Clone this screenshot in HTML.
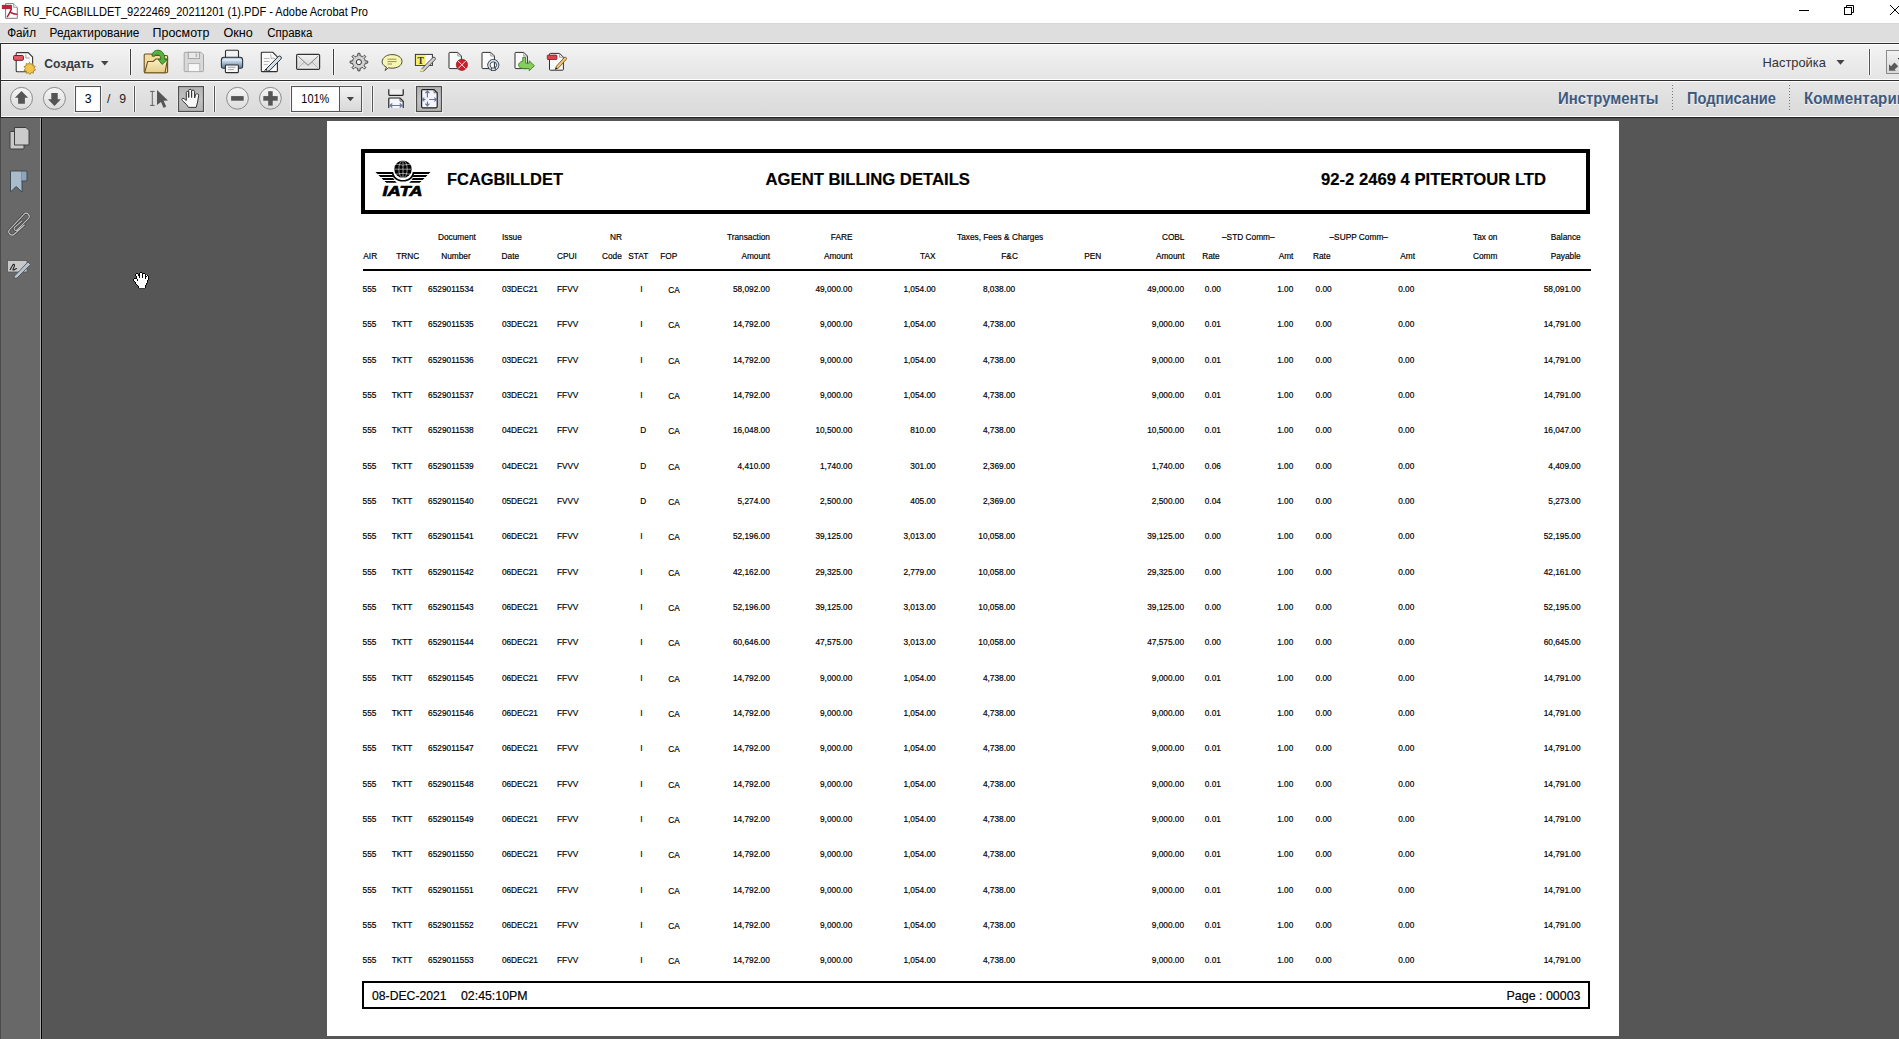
<!DOCTYPE html>
<html><head><meta charset="utf-8"><title>Adobe Acrobat Pro</title>
<style>
html,body{margin:0;padding:0;width:1899px;height:1039px;overflow:hidden;background:#565656;}
svg{display:block;font-family:"Liberation Sans",sans-serif;}
.pg>text{stroke:#000;stroke-width:0.18px;}
</style></head>
<body>
<svg width="1899" height="1039" viewBox="0 0 1899 1039">
<defs>
<linearGradient id="tb1" x1="0" y1="0" x2="0" y2="1"><stop offset="0" stop-color="#f3f3f3"/><stop offset="1" stop-color="#e4e4e4"/></linearGradient>
<linearGradient id="tb2" x1="0" y1="0" x2="0" y2="1"><stop offset="0" stop-color="#e6e6e6"/><stop offset="1" stop-color="#d9d9d9"/></linearGradient>
<linearGradient id="circ" x1="0" y1="0" x2="0" y2="1"><stop offset="0" stop-color="#f6f6f6"/><stop offset="1" stop-color="#dcdcdc"/></linearGradient>
<linearGradient id="sel" x1="0" y1="0" x2="0" y2="1"><stop offset="0" stop-color="#b2b2b2"/><stop offset="0.5" stop-color="#c2c2c2"/><stop offset="1" stop-color="#b4b4b4"/></linearGradient>
<linearGradient id="ddg" x1="0" y1="0" x2="0" y2="1"><stop offset="0" stop-color="#f2f2f2"/><stop offset="1" stop-color="#d8d8d8"/></linearGradient>
<linearGradient id="printg" x1="0" y1="0" x2="0" y2="1"><stop offset="0" stop-color="#7d95ab"/><stop offset="0.25" stop-color="#d6e6f2"/><stop offset="0.6" stop-color="#98b2c8"/><stop offset="1" stop-color="#5d7890"/></linearGradient>
<linearGradient id="mailg" x1="0" y1="0" x2="0" y2="1"><stop offset="0" stop-color="#f4f4f4"/><stop offset="0.6" stop-color="#dedede"/><stop offset="1" stop-color="#eeeeee"/></linearGradient>
<linearGradient id="folderg" x1="0" y1="0" x2="0" y2="1"><stop offset="0" stop-color="#fbf0c6"/><stop offset="1" stop-color="#e6cd88"/></linearGradient>
</defs>

<!-- title bar -->
<rect x="0" y="0" width="1899" height="23" fill="#ffffff"/>
<g id="pdficon">
<path d="M5.6 3.6 H13.6 L17.3 7.3 V18.3 H5.6 Z" fill="#ffffff" stroke="#8a7278" stroke-width="1"/>
<path d="M13.6 3.6 V7.3 H17.3" fill="#eeeeee" stroke="#a08a90" stroke-width="0.8"/>
<rect x="2.2" y="5.2" width="9.4" height="3.6" fill="#c41e3a" stroke="#8a1020" stroke-width="0.6"/>
<path d="M7.4 16.6 C9 14 10.6 11.5 11.3 9.2 M11 12.6 C12.5 13.6 14.6 14.2 16.6 14.2" fill="none" stroke="#b01830" stroke-width="1.5" stroke-linecap="round"/>
</g>
<text x="23.5" y="16.2" font-size="12" fill="#000" textLength="344.5" lengthAdjust="spacingAndGlyphs">RU_FCAGBILLDET_9222469_20211201 (1).PDF - Adobe Acrobat Pro</text>
<rect x="1799" y="10" width="10" height="1" fill="#000"/>
<path d="M1846.5 7.5 V5.5 H1853.5 V12.5 H1851.5" fill="none" stroke="#000" stroke-width="1"/>
<rect x="1844.5" y="7.5" width="7" height="7" fill="none" stroke="#000" stroke-width="1"/>
<path d="M1890 5 L1900 15 M1890 15 L1900 5" stroke="#000" stroke-width="1"/>

<!-- menu bar -->
<rect x="0" y="23" width="1899" height="20" fill="#dedede"/>
<rect x="0" y="23" width="1899" height="1" fill="#d8d8d8"/>
<rect x="0" y="42" width="1899" height="1" fill="#f3f3f3"/>
<g font-size="12" fill="#000">
<text x="7.2" y="37" textLength="28.8" lengthAdjust="spacingAndGlyphs">Файл</text>
<text x="49.6" y="37" textLength="89.8" lengthAdjust="spacingAndGlyphs">Редактирование</text>
<text x="152.6" y="37" textLength="56.8" lengthAdjust="spacingAndGlyphs">Просмотр</text>
<text x="223.5" y="37" textLength="29.4" lengthAdjust="spacingAndGlyphs">Окно</text>
<text x="267.2" y="37" textLength="45.2" lengthAdjust="spacingAndGlyphs">Справка</text>
</g>

<!-- toolbar 1 -->
<rect x="0" y="43" width="1899" height="1" fill="#2e2e2e"/>
<rect x="0" y="44" width="1899" height="36" fill="url(#tb1)"/>
<rect x="0" y="44" width="1899" height="1" fill="#ffffff"/>
<rect x="0" y="79" width="1899" height="1" fill="#ffffff"/>
<rect x="0" y="43" width="1" height="38" fill="#2e2e2e"/>
<rect x="0" y="80" width="1899" height="1" fill="#2e2e2e"/>

<!-- create icon -->
<g id="create">
<path d="M17.2 52.6 H28.2 L32.6 57 V70.8 Q32.6 71.8 31.6 71.8 H17.2 Q16.2 71.8 16.2 70.8 V53.6 Q16.2 52.6 17.2 52.6 Z" fill="#fbfbfb" stroke="#383838" stroke-width="1.1"/>
<path d="M25.8 54.6 V58 H29.6" fill="none" stroke="#9a9a9a" stroke-width="0.9"/>
<rect x="13.6" y="55.5" width="9.8" height="4.8" rx="1" fill="#e35b64" stroke="#7a1a22" stroke-width="1"/>
<path d="M29.5 62.2 L30.6 64.3 L32.8 63.5 L32.9 65.8 L35.2 66.3 L34 68.3 L35.6 70 L33.4 70.8 L33.4 73.1 L31.2 72.6 L29.9 74.5 L28.5 72.7 L26.3 73.3 L26.2 71 L24 70.3 L25.4 68.4 L24 66.5 L26.2 65.8 L26.2 63.5 L28.4 64.2 Z" fill="#f0c64a" stroke="#9c7a26" stroke-width="0.8"/>
</g>
<text x="44.2" y="67.9" font-size="13" font-weight="bold" fill="#343a42" textLength="49.8" lengthAdjust="spacingAndGlyphs">Создать</text>
<path d="M101 61 H108.5 L104.75 65.5 Z" fill="#444"/>
<rect x="129" y="49" width="1" height="26" fill="#ffffff" opacity="0.7"/><rect x="131" y="49" width="1" height="26" fill="#ffffff" opacity="0.7"/><rect x="130" y="49" width="1" height="26" fill="#3a3a3a"/>

<!-- open folder -->
<g id="open">
<path d="M145.3 54 H151.5 L153 55.5 H166.5 Q167.6 55.5 167.6 56.6 V71.6 Q167.6 72.7 166.5 72.7 H145.3 Q144.2 72.7 144.2 71.6 V55.1 Q144.2 54 145.3 54 Z" fill="#f3dc9c" stroke="#6b5320" stroke-width="1.1"/>
<path d="M147.7 61.5 H153.3 L155.8 59 H167.6 L165 72.7 H144.6 Z" fill="url(#folderg)" stroke="#6b5320" stroke-width="1.1"/>
<path d="M152.2 56.2 C152 51.5 156 49.6 159 50.3 C162.5 51 165 54.5 164.6 59.3 L167.6 59.3 L162.1 64.4 L158 59.3 L160.8 59.3 C161 56 158.8 54 156.7 54.3 C155 54.5 154.4 56 154.6 56.3 Z" fill="#58b33e" stroke="#2f6b1c" stroke-width="0.9"/>
</g>
<!-- save (disabled) -->
<g id="save">
<path d="M185 52.3 H201 L203.5 54.8 V70.8 Q203.5 71.6 202.7 71.6 H185 Q184.2 71.6 184.2 70.8 V53.1 Q184.2 52.3 185 52.3 Z" fill="#d9d9d9" stroke="#a6a6a6" stroke-width="1"/>
<rect x="188.3" y="52.3" width="11.2" height="6.2" fill="#e9e9e9" stroke="#a6a6a6" stroke-width="1"/>
<rect x="195.6" y="53.5" width="1.6" height="3.6" fill="#b6b6b6"/>
<rect x="188.2" y="63.6" width="11.6" height="8" fill="#f7f7f7" stroke="#b0b0b0" stroke-width="0.9"/>
</g>
<!-- print -->
<g id="print">
<rect x="225.5" y="50.3" width="13" height="9.5" rx="1" fill="#f2f2f2" stroke="#2e2e2e" stroke-width="1.1"/>
<path d="M224 57.3 H240 Q242.6 57.3 242.6 60 V66.5 Q242.6 68.3 240.8 68.3 H223.2 Q221.4 68.3 221.4 66.5 V60 Q221.4 57.3 224 57.3 Z" fill="url(#printg)" stroke="#2a3440" stroke-width="1.1"/>
<rect x="223.5" y="58.6" width="17" height="1.6" fill="#e8f2fa" opacity="0.8"/>
<rect x="225.4" y="65" width="13" height="7.6" rx="0.8" fill="#fafafa" stroke="#2e2e2e" stroke-width="1.1"/>
<path d="M228 67.3 H235.5 M228 69.6 H234" stroke="#8a8a8a" stroke-width="0.8"/>
</g>
<!-- edit document -->
<g id="editdoc">
<path d="M262.1 52.3 H272.8 L277.4 56.9 V70.8 Q277.4 71.6 276.6 71.6 H262.1 Q261.3 71.6 261.3 70.8 V53.1 Q261.3 52.3 262.1 52.3 Z" fill="#fafafa" stroke="#2e2e2e" stroke-width="1.1"/>
<path d="M270.5 54.3 Q271.5 57 271 58.5 Q273 58 275 58.5" fill="none" stroke="#9a9a9a" stroke-width="0.7"/>
<path d="M263.8 58.5 H269.5 M263.8 61.5 H269.5 M263.8 64.5 H267.5" stroke="#a8a8a8" stroke-width="0.8"/>
<path d="M266.8 68.3 L278.2 56.6 Q279.6 55.4 280.9 56.6 Q282 57.8 280.8 59.2 L269.4 70.8 L265.8 71.5 Z" fill="#d6e0ea" stroke="#263038" stroke-width="1"/>
<path d="M264.5 70.5 L266.6 68.5" stroke="#222" stroke-width="1"/>
</g>
<!-- email -->
<g id="mail">
<rect x="296.6" y="54.4" width="23" height="15" rx="1.2" fill="url(#mailg)" stroke="#333" stroke-width="1.2"/>
<path d="M298.3 56.3 L308.1 65.4 L317.9 56.3" fill="none" stroke="#707070" stroke-width="0.9"/>
<path d="M298.3 67.8 L304.3 62.2 M317.9 67.8 L312 62.2" fill="none" stroke="#a6a6a6" stroke-width="0.8"/>
</g>
<rect x="332" y="49" width="1" height="26" fill="#ffffff" opacity="0.7"/><rect x="334" y="49" width="1" height="26" fill="#ffffff" opacity="0.7"/><rect x="333" y="49" width="1" height="26" fill="#3a3a3a"/>
<!-- gear -->
<g id="gear">
<path d="M358.9 53.3 L359.1 53.3 L359.4 53.3 L359.6 53.3 L359.8 53.3 L360.0 54.0 L360.0 55.4 L360.1 55.8 L360.2 55.8 L360.4 55.9 L360.6 55.9 L360.7 56.0 L360.9 56.0 L361.0 56.1 L361.2 56.1 L361.3 56.2 L361.5 56.3 L361.7 56.3 L361.8 56.4 L362.0 56.5 L362.1 56.6 L362.2 56.6 L362.4 56.7 L362.5 56.8 L362.9 56.6 L363.9 55.6 L364.4 55.3 L364.6 55.4 L364.8 55.6 L365.0 55.7 L365.1 55.9 L365.3 56.0 L365.4 56.2 L365.6 56.4 L365.7 56.6 L365.4 57.1 L364.4 58.1 L364.2 58.5 L364.3 58.6 L364.4 58.8 L364.4 58.9 L364.5 59.0 L364.6 59.2 L364.7 59.3 L364.7 59.5 L364.8 59.7 L364.9 59.8 L364.9 60.0 L365.0 60.1 L365.0 60.3 L365.1 60.4 L365.1 60.6 L365.2 60.8 L365.2 60.9 L365.6 61.0 L367.0 61.0 L367.7 61.2 L367.7 61.4 L367.7 61.6 L367.7 61.9 L367.7 62.1 L367.7 62.3 L367.7 62.6 L367.7 62.8 L367.7 63.0 L367.0 63.2 L365.6 63.2 L365.2 63.3 L365.2 63.4 L365.1 63.6 L365.1 63.8 L365.0 63.9 L365.0 64.1 L364.9 64.2 L364.9 64.4 L364.8 64.5 L364.7 64.7 L364.7 64.9 L364.6 65.0 L364.5 65.2 L364.4 65.3 L364.4 65.4 L364.3 65.6 L364.2 65.7 L364.4 66.1 L365.4 67.1 L365.7 67.6 L365.6 67.8 L365.4 68.0 L365.3 68.2 L365.1 68.3 L365.0 68.5 L364.8 68.6 L364.6 68.8 L364.4 68.9 L363.9 68.6 L362.9 67.6 L362.5 67.4 L362.4 67.5 L362.2 67.6 L362.1 67.6 L362.0 67.7 L361.8 67.8 L361.7 67.9 L361.5 67.9 L361.3 68.0 L361.2 68.1 L361.0 68.1 L360.9 68.2 L360.7 68.2 L360.6 68.3 L360.4 68.3 L360.2 68.4 L360.1 68.4 L360.0 68.8 L360.0 70.2 L359.8 70.9 L359.6 70.9 L359.4 70.9 L359.1 70.9 L358.9 70.9 L358.7 70.9 L358.4 70.9 L358.2 70.9 L358.0 70.9 L357.8 70.2 L357.8 68.8 L357.7 68.4 L357.6 68.4 L357.4 68.3 L357.2 68.3 L357.1 68.2 L356.9 68.2 L356.8 68.1 L356.6 68.1 L356.5 68.0 L356.3 67.9 L356.1 67.9 L356.0 67.8 L355.8 67.7 L355.7 67.6 L355.6 67.6 L355.4 67.5 L355.3 67.4 L354.9 67.6 L353.9 68.6 L353.4 68.9 L353.2 68.8 L353.0 68.6 L352.8 68.5 L352.7 68.3 L352.5 68.2 L352.4 68.0 L352.2 67.8 L352.1 67.6 L352.4 67.1 L353.4 66.1 L353.6 65.7 L353.5 65.6 L353.4 65.4 L353.4 65.3 L353.3 65.2 L353.2 65.0 L353.1 64.9 L353.1 64.7 L353.0 64.5 L352.9 64.4 L352.9 64.2 L352.8 64.1 L352.8 63.9 L352.7 63.8 L352.7 63.6 L352.6 63.4 L352.6 63.3 L352.2 63.2 L350.8 63.2 L350.1 63.0 L350.1 62.8 L350.1 62.6 L350.1 62.3 L350.1 62.1 L350.1 61.9 L350.1 61.6 L350.1 61.4 L350.1 61.2 L350.8 61.0 L352.2 61.0 L352.6 60.9 L352.6 60.8 L352.7 60.6 L352.7 60.4 L352.8 60.3 L352.8 60.1 L352.9 60.0 L352.9 59.8 L353.0 59.7 L353.1 59.5 L353.1 59.3 L353.2 59.2 L353.3 59.0 L353.4 58.9 L353.4 58.8 L353.5 58.6 L353.6 58.5 L353.4 58.1 L352.4 57.1 L352.1 56.6 L352.2 56.4 L352.4 56.2 L352.5 56.0 L352.7 55.9 L352.8 55.7 L353.0 55.6 L353.2 55.4 L353.4 55.3 L353.9 55.6 L354.9 56.6 L355.3 56.8 L355.4 56.7 L355.6 56.6 L355.7 56.6 L355.8 56.5 L356.0 56.4 L356.1 56.3 L356.3 56.3 L356.5 56.2 L356.6 56.1 L356.8 56.1 L356.9 56.0 L357.1 56.0 L357.2 55.9 L357.4 55.9 L357.6 55.8 L357.7 55.8 L357.8 55.4 L357.8 54.0 L358.0 53.3 L358.2 53.3 L358.4 53.3 L358.7 53.3 Z" fill="#d2d2d2" stroke="#333" stroke-width="1" stroke-linejoin="round"/>
<circle cx="358.9" cy="62.1" r="2.6" fill="#f4f4f4" stroke="#333" stroke-width="1"/>
</g>
<!-- comment bubble -->
<g id="bubble">
<path d="M386.5 67 C382.5 65.5 381.5 62.5 382.5 60 C384 56 388.5 54.6 392 54.6 C397.5 54.6 402 57.3 402 61.5 C402 65.5 397.5 68.2 392 68.2 C390.5 68.2 389.5 68 388.5 67.8 L385 70.5 Z" fill="#f8f6b4" stroke="#4e4e34" stroke-width="1"/>
<path d="M387.5 59.2 H396.5 M387.5 61.6 H396.5 M387.5 64 H392" stroke="#8a843e" stroke-width="0.9"/>
</g>
<!-- text annotation -->
<g id="tannot">
<rect x="415.4" y="54.4" width="17" height="11" fill="#fbfbfb" stroke="#333" stroke-width="1"/>
<rect x="416" y="55" width="9.6" height="9.8" fill="#f4ee6a"/>
<text x="417.4" y="63.6" font-size="9.5" font-weight="bold" fill="#333" font-family="Liberation Serif">T</text>
<path d="M421.6 69 L432.8 57.6 Q434 56.6 435 57.6 Q436 58.7 435 59.8 L423.8 71 L420.8 71.5 Z" fill="#cfcfcf" stroke="#444" stroke-width="0.9"/>
<circle cx="421.8" cy="70.2" r="1.5" fill="#eee88e"/>
</g>
<!-- doc with red x -->
<g id="docx">
<path d="M449.8 52.4 H457.8 L461.4 56 V67.8 Q461.4 68.6 460.6 68.6 H449.8 Q449 68.6 449 67.8 V53.2 Q449 52.4 449.8 52.4 Z" fill="#fafafa" stroke="#2e2e2e" stroke-width="1"/>
<path d="M457.8 52.4 V56 H461.4" fill="none" stroke="#888" stroke-width="0.8"/>
<circle cx="461.9" cy="64.8" r="5.6" fill="#c8202c" stroke="#8a1520" stroke-width="0.7"/>
<path d="M458.2 61.1 L465.6 68.5 M465.6 61.1 L458.2 68.5" stroke="#ffffff" stroke-width="0.9"/>
</g>
<!-- doc with circular arrow -->
<g id="docr">
<path d="M482.8 52.4 H490.8 L494.4 56 V67.8 Q494.4 68.6 493.6 68.6 H482.8 Q482 68.6 482 67.8 V53.2 Q482 52.4 482.8 52.4 Z" fill="#fafafa" stroke="#2e2e2e" stroke-width="1"/>
<path d="M490.8 52.4 V56 H494.4" fill="none" stroke="#888" stroke-width="0.8"/>
<path d="M491 68.8 A4.4 4.4 0 1 1 495.6 68.8" fill="none" stroke="#333c46" stroke-width="3.2"/>
<path d="M491 68.8 A4.4 4.4 0 1 1 495.6 68.8" fill="none" stroke="#d6e2ec" stroke-width="1.6"/>
<rect x="491.3" y="68" width="4" height="2.6" fill="#d6e2ec" stroke="#333c46" stroke-width="0.8"/>
</g>
<!-- doc with green arrow -->
<g id="docg">
<path d="M515.8 52.4 H523.8 L527.4 56 V67.8 Q527.4 68.6 526.6 68.6 H515.8 Q515 68.6 515 67.8 V53.2 Q515 52.4 515.8 52.4 Z" fill="#fafafa" stroke="#2e2e2e" stroke-width="1"/>
<path d="M523.8 52.4 V56 H527.4" fill="none" stroke="#888" stroke-width="0.8"/>
<path d="M522.8 57.4 V61.2 C519.8 61.8 518.3 63.6 518.6 65.5 C519 67.6 521.2 68.6 524.2 68.6 H529.2 V70.8 L534.4 65.8 L529.2 60.8 V63.2 H525.6 V57.4 Z" fill="#86cf5c" stroke="#3b7d22" stroke-width="0.9"/>
</g>
<!-- doc with red bar and pencil -->
<g id="docp">
<path d="M550.3 53.4 H559.6 L563.4 57.2 V69.4 Q563.4 70.2 562.6 70.2 H550.3 Q549.5 70.2 549.5 69.4 V54.2 Q549.5 53.4 550.3 53.4 Z" fill="#fafafa" stroke="#2e2e2e" stroke-width="1"/>
<path d="M559.6 53.4 V57.2 H563.4" fill="none" stroke="#888" stroke-width="0.8"/>
<rect x="547.3" y="55.1" width="9.6" height="4.4" rx="0.6" fill="#e0404c" stroke="#7a1a22" stroke-width="0.8"/>
<path d="M556.4 66.2 L564.2 57.6 Q565.2 56.6 566.2 57.6 Q567 58.6 566.1 59.6 L558.3 68.2 L555.2 69.4 Z" fill="#ecc473" stroke="#6a4a18" stroke-width="0.8"/>
<path d="M555.2 69.4 L556.2 67.4 L557.4 68.6 Z" fill="#111"/>
</g>

<!-- right side toolbar 1 -->
<text x="1762.5" y="67.4" font-size="13" fill="#333" textLength="63.4" lengthAdjust="spacingAndGlyphs">Настройка</text>
<path d="M1836.5 60 H1844.5 L1840.5 64.8 Z" fill="#444"/>
<rect x="1868" y="49" width="1" height="26" fill="#ffffff" opacity="0.7"/><rect x="1870" y="49" width="1" height="26" fill="#ffffff" opacity="0.7"/><rect x="1869" y="49" width="1" height="26" fill="#555"/>
<g id="partialicon">
<rect x="1886.5" y="50.5" width="14" height="23" fill="url(#ddg)" stroke="#8a8a8a" stroke-width="1"/>
<path d="M1889 70.8 V64.2 L1891 66.2 L1894.5 62.5 L1898.2 66.2 L1894.6 69.6 L1895.9 70.8 Z" fill="#5a5a5a"/>
<rect x="1898" y="58" width="2" height="1.2" fill="#222"/>
</g>

<!-- toolbar 2 -->
<rect x="0" y="81" width="1899" height="36" fill="url(#tb2)"/>
<rect x="0" y="81" width="1899" height="1" fill="#ffffff"/>
<rect x="0" y="116" width="1899" height="1" fill="#ffffff"/>
<rect x="0" y="81" width="1" height="36" fill="#2e2e2e"/>
<rect x="0" y="117" width="1899" height="1" fill="#252525"/>

<!-- prev / next -->
<circle cx="21.5" cy="98.4" r="11" fill="url(#circ)" stroke="#8a8a8a" stroke-width="1"/>
<path d="M21.5 90.9 L28.1 97.8 H24.9 V103.7 H18.1 V97.8 H14.9 Z" fill="#555"/>
<circle cx="54.4" cy="98.4" r="11" fill="url(#circ)" stroke="#8a8a8a" stroke-width="1"/>
<path d="M54.5 105.9 L60.9 99.3 H57.7 V93.1 H51.3 V99.3 H48 Z" fill="#555"/>
<rect x="74.5" y="85.5" width="27" height="27" fill="none" stroke="#fafafa" stroke-width="1"/>
<rect x="75.5" y="86.5" width="25" height="25" fill="#ffffff" stroke="#555" stroke-width="1.1"/>
<text x="84.8" y="103" font-size="12.3" fill="#000">3</text>
<text x="107" y="103" font-size="12.3" fill="#222">/</text>
<text x="119.2" y="103" font-size="12.3" fill="#222">9</text>
<rect x="133" y="86" width="1" height="26" fill="#ffffff" opacity="0.7"/><rect x="135" y="86" width="1" height="26" fill="#ffffff" opacity="0.7"/><rect x="134" y="86" width="1" height="26" fill="#555"/>
<!-- select tool -->
<g id="selecttool">
<path d="M150 91.4 H154.6 M152.3 91.4 V105.4 M150 105.4 H154.6" stroke="#555" stroke-width="0.9" fill="none"/>
<path d="M157 90 L168 100.6 L163.6 100.8 L166.2 106.6 L163.6 107.9 L161 101.9 L157 104.9 Z" fill="#555"/>
</g>
<!-- hand tool selected -->
<rect x="177.5" y="85.5" width="27" height="27" fill="none" stroke="#fafafa" stroke-width="1"/>
<rect x="178.5" y="86.5" width="25" height="25" fill="url(#sel)" stroke="#4e4e4e" stroke-width="1.2"/>
<path d="M186.5 104.5 L182.3 100.5 C181 99 182.6 97.6 184 98.6 L186.3 100.5 V92.5 C186.3 91 188.7 91 188.7 92.5 V97.5 V90.5 C188.7 88.9 191.6 88.9 191.6 90.5 V97.5 V91.3 C191.6 89.7 194.6 89.7 194.6 91.3 V98 L195.5 94.8 C195.9 93.2 198.9 93.5 198.7 95.2 L197.6 102 L196.2 107.4 H188.5 Z" fill="#f8f8f8" stroke="#333" stroke-width="1"/>
<rect x="213" y="86" width="1" height="26" fill="#ffffff" opacity="0.7"/><rect x="215" y="86" width="1" height="26" fill="#ffffff" opacity="0.7"/><rect x="214" y="86" width="1" height="26" fill="#555"/>
<!-- zoom out / in -->
<circle cx="237.5" cy="98.3" r="10.9" fill="url(#circ)" stroke="#8a8a8a" stroke-width="1"/>
<rect x="231.1" y="96.1" width="12.6" height="4.6" fill="#555"/>
<circle cx="270.4" cy="98.3" r="10.9" fill="url(#circ)" stroke="#8a8a8a" stroke-width="1"/>
<rect x="263.3" y="96.1" width="14.4" height="4.6" fill="#555"/>
<rect x="268.2" y="91.2" width="4.5" height="14.4" fill="#555"/>
<!-- zoom box -->
<rect x="290.5" y="85.5" width="72" height="27" fill="none" stroke="#fafafa" stroke-width="1"/>
<rect x="291.5" y="86.5" width="70" height="25" fill="#ffffff" stroke="#555" stroke-width="1.1"/>
<rect x="340" y="87.2" width="21" height="23.6" fill="url(#ddg)"/>
<rect x="339" y="87" width="1" height="24" fill="#555"/>
<text x="301.3" y="103" font-size="12.3" fill="#000" textLength="28" lengthAdjust="spacingAndGlyphs">101%</text>
<path d="M346.8 97 H354 L350.4 101.2 Z" fill="#444"/>
<rect x="371" y="86" width="1" height="26" fill="#ffffff" opacity="0.7"/><rect x="373" y="86" width="1" height="26" fill="#ffffff" opacity="0.7"/><rect x="372" y="86" width="1" height="26" fill="#555"/>
<!-- fit width -->
<g id="fitw">
<path d="M388.8 89.2 V94.6 Q388.8 95.4 389.6 95.4 H402.4 Q403.2 95.4 403.2 94.6 V89.2" fill="#efefef" stroke="#222" stroke-width="1.2"/>
<path d="M388.8 108 V98.8 Q388.8 98 389.6 98 H400 L403.2 101.2 V108" fill="#f6f7fb" stroke="#222" stroke-width="1.2"/>
<path d="M400 98 V101.2 H403.2" fill="none" stroke="#444" stroke-width="0.8"/>
<path d="M390 105.5 H402 M392.3 103.5 L390 105.5 L392.3 107.5 M399.7 103.5 L402 105.5 L399.7 107.5" stroke="#6b75a0" stroke-width="1.2" fill="none"/>
</g>
<!-- fit page selected -->
<rect x="415.5" y="85.5" width="27" height="27" fill="none" stroke="#fafafa" stroke-width="1"/>
<rect x="416.5" y="86.5" width="25" height="25" fill="url(#sel)" stroke="#4e4e4e" stroke-width="1.2"/>
<g id="fitp">
<path d="M421.6 90.8 Q421.6 89.6 422.8 89.6 H434 L437.2 92.8 V106.6 Q437.2 107.8 436 107.8 H422.8 Q421.6 107.8 421.6 106.6 Z" fill="#f4f5fa" stroke="#1e1e1e" stroke-width="1.2"/>
<path d="M434 89.6 V92.8 H437.2" fill="none" stroke="#555" stroke-width="0.8"/>
<path d="M427.4 91.3 V97.6 M427.4 101.4 V105.6 M422.6 99.5 H425.6 M429.2 99.5 H436.4 M425.4 93.2 L427.4 91 L429.4 93.2 M425.4 103.7 L427.4 105.9 L429.4 103.7 M424.4 97.6 L422.3 99.5 L424.4 101.4 M434.3 97.6 L436.5 99.5 L434.3 101.4" stroke="#6b75a0" stroke-width="1.2" fill="none"/>
</g>

<!-- right tabs -->
<g font-size="15.8" font-weight="bold" fill="#ffffff" opacity="0.8">
<text x="1558" y="104.8" textLength="100.5" lengthAdjust="spacingAndGlyphs">Инструменты</text>
<text x="1687" y="104.8" textLength="89" lengthAdjust="spacingAndGlyphs">Подписание</text>
<text x="1804" y="104.8" textLength="102" lengthAdjust="spacingAndGlyphs">Комментарии</text>
</g>
<g font-size="15.8" font-weight="bold" fill="#3e5a7f">
<text x="1558" y="103.8" textLength="100.5" lengthAdjust="spacingAndGlyphs">Инструменты</text>
<text x="1687" y="103.8" textLength="89" lengthAdjust="spacingAndGlyphs">Подписание</text>
<text x="1804" y="103.8" textLength="102" lengthAdjust="spacingAndGlyphs">Комментарии</text>
</g>
<path d="M1672.5 85 V112" stroke="#777" stroke-width="1" stroke-dasharray="1 2"/>
<path d="M1789.5 85 V112" stroke="#777" stroke-width="1" stroke-dasharray="1 2"/>

<!-- left panel -->
<rect x="0" y="118" width="40" height="921" fill="#686868"/>
<rect x="0" y="118" width="1" height="921" fill="#4a4a4a"/>
<rect x="40" y="118" width="1" height="921" fill="#a9a9a9"/>
<rect x="41" y="118" width="1" height="921" fill="#000000"/>
<rect x="42" y="118" width="1" height="921" fill="#5d5d5d"/>
<rect x="42" y="118" width="1857" height="1" fill="#4f4f4f"/>
<!-- pages icon -->
<rect x="10" y="131.5" width="14" height="17.5" rx="1" fill="#c9c9c9" stroke="#3e3e3e" stroke-width="1"/>
<path d="M14.5 127.5 H26 L29 130.5 V145 H14.5 Z" fill="#cbcbcb" stroke="#3e3e3e" stroke-width="1"/>
<!-- bookmark icon -->
<path d="M10.5 171 H22 V192 L16.2 186.5 L10.5 192 Z" fill="#a9bccb" stroke="#3e4a55" stroke-width="1"/>
<path d="M21.5 171 H27 V181 H21.5" fill="#8fa6b8" stroke="#3e4a55" stroke-width="1"/>
<!-- paperclip -->
<path d="M24.4 225 L14.5 234 A3.3 3.3 0 0 1 9.8 229.3 L23.9 214.3 A3 3 0 0 1 28.3 218.6 L17.2 229.8 A1.8 1.8 0 0 1 14.6 227.3 L22 220.9" fill="none" stroke="#3c3c3c" stroke-width="2.4" stroke-linecap="round"/>
<path d="M24.4 225 L14.5 234 A3.3 3.3 0 0 1 9.8 229.3 L23.9 214.3 A3 3 0 0 1 28.3 218.6 L17.2 229.8 A1.8 1.8 0 0 1 14.6 227.3 L22 220.9" fill="none" stroke="#c4c4c4" stroke-width="1.1" stroke-linecap="round"/>
<!-- sign icon -->
<rect x="7.5" y="260.5" width="19.5" height="11.5" fill="#c8c8c8" stroke="#555" stroke-width="0.8"/>
<path d="M10 270 C12 266 13.5 263 14.5 265 C15 267 12 269 13 270 C14 270.5 16 268 17 268.5" fill="none" stroke="#222" stroke-width="1.1"/>
<path d="M14.5 276 L28 262 L30.5 264.5 L17 278 L14 278.5 Z" fill="#b8c2cc" stroke="#4c5660" stroke-width="0.9"/>

<!-- page -->
<rect x="327" y="121" width="1292" height="915" fill="#ffffff"/>
<g class="pg" font-size="8.6" fill="#000">
<rect x="363" y="151" width="1225" height="61" fill="none" stroke="#000" stroke-width="4"/>
<text x="447" y="184.8" font-weight="bold" font-size="16.3" textLength="116" lengthAdjust="spacingAndGlyphs">FCAGBILLDET</text>
<text x="765.5" y="184.8" font-weight="bold" font-size="16.3" textLength="204.5" lengthAdjust="spacingAndGlyphs">AGENT BILLING DETAILS</text>
<text x="1321" y="184.8" font-weight="bold" font-size="16.3" textLength="225" lengthAdjust="spacingAndGlyphs">92-2 2469 4 PITERTOUR LTD</text>
<g id="iata">
<path d="M375.4 171.9 H392.5 L393.2 174 H377.6 Z M378.4 175.1 H392.6 L393.4 177.1 H380.4 Z M381.4 178.1 H393.2 L394.4 180.1 H383.4 Z M384.4 181.1 H395 L396.8 182.8 H386.4 Z" fill="#000"/>
<path d="M430.6 171.9 H413.5 L412.8 174 H428.4 Z M427.6 175.1 H413.4 L412.6 177.1 H425.6 Z M424.6 178.1 H412.8 L411.6 180.1 H422.6 Z M421.6 181.1 H411 L409.2 182.8 H419.6 Z" fill="#000"/>
<path d="M391.5 172 C392.5 178.5 397 181.6 403 181.6 C409 181.6 413.5 178.5 414.5 172 L412.8 172 C411.8 177.5 408 180 403 180 C398 180 394.2 177.5 393.2 172 Z" fill="#000"/>
<circle cx="403" cy="169.2" r="9.6" fill="#fff"/>
<circle cx="403" cy="169.2" r="8.7" fill="#000"/>
<g stroke="#fff" stroke-width="0.55" fill="none">
<ellipse cx="403" cy="169.2" rx="4.2" ry="8.7"/>
<line x1="403" y1="160.5" x2="403" y2="177.9"/>
<line x1="394.3" y1="169.2" x2="411.7" y2="169.2"/>
<path d="M395.8 164.2 Q403 166 410.2 164.2"/>
<path d="M395.8 174.2 Q403 172.4 410.2 174.2"/>
</g>
<text x="382.5" y="195.6" font-size="14.6" font-weight="bold" font-style="italic" stroke="#000" stroke-width="0.7" textLength="40" lengthAdjust="spacingAndGlyphs">IATA</text>
</g>
<text x="438" y="240.2" textLength="37.82" lengthAdjust="spacingAndGlyphs">Document</text>
<text x="502" y="240.2" textLength="19.84" lengthAdjust="spacingAndGlyphs">Issue</text>
<text x="610" y="240.2" textLength="11.99" lengthAdjust="spacingAndGlyphs">NR</text>
<text x="770" y="240.2" text-anchor="end" textLength="43.05" lengthAdjust="spacingAndGlyphs">Transaction</text>
<text x="852.5" y="240.2" text-anchor="end" textLength="21.68" lengthAdjust="spacingAndGlyphs">FARE</text>
<text x="957" y="240.2" textLength="86.26" lengthAdjust="spacingAndGlyphs">Taxes, Fees &amp; Charges</text>
<text x="1184.5" y="240.2" text-anchor="end" textLength="22.6" lengthAdjust="spacingAndGlyphs">COBL</text>
<text x="1222" y="240.2" textLength="52.57" lengthAdjust="spacingAndGlyphs">–STD Comm–</text>
<text x="1329.5" y="240.2" textLength="58.42" lengthAdjust="spacingAndGlyphs">–SUPP Comm–</text>
<text x="1473" y="240.2" textLength="24.45" lengthAdjust="spacingAndGlyphs">Tax on</text>
<text x="1580.7" y="240.2" text-anchor="end" textLength="29.99" lengthAdjust="spacingAndGlyphs">Balance</text>
<text x="363.3" y="259.2" textLength="13.83" lengthAdjust="spacingAndGlyphs">AIR</text>
<text x="396.3" y="259.2" textLength="23.05" lengthAdjust="spacingAndGlyphs">TRNC</text>
<text x="441.2" y="259.2" textLength="29.52" lengthAdjust="spacingAndGlyphs">Number</text>
<text x="501.6" y="259.2" textLength="17.53" lengthAdjust="spacingAndGlyphs">Date</text>
<text x="557" y="259.2" textLength="19.83" lengthAdjust="spacingAndGlyphs">CPUI</text>
<text x="602" y="259.2" textLength="19.84" lengthAdjust="spacingAndGlyphs">Code</text>
<text x="628.3" y="259.2" textLength="19.98" lengthAdjust="spacingAndGlyphs">STAT</text>
<text x="660.3" y="259.2" textLength="17.06" lengthAdjust="spacingAndGlyphs">FOP</text>
<text x="770" y="259.2" text-anchor="end" textLength="28.6" lengthAdjust="spacingAndGlyphs">Amount</text>
<text x="852.5" y="259.2" text-anchor="end" textLength="28.6" lengthAdjust="spacingAndGlyphs">Amount</text>
<text x="935.5" y="259.2" text-anchor="end" textLength="15.52" lengthAdjust="spacingAndGlyphs">TAX</text>
<text x="1001.3" y="259.2" textLength="16.6" lengthAdjust="spacingAndGlyphs">F&amp;C</text>
<text x="1084.2" y="259.2" textLength="17.06" lengthAdjust="spacingAndGlyphs">PEN</text>
<text x="1184.5" y="259.2" text-anchor="end" textLength="28.6" lengthAdjust="spacingAndGlyphs">Amount</text>
<text x="1202.2" y="259.2" textLength="17.53" lengthAdjust="spacingAndGlyphs">Rate</text>
<text x="1293.4" y="259.2" text-anchor="end" textLength="14.75" lengthAdjust="spacingAndGlyphs">Amt</text>
<text x="1313" y="259.2" textLength="17.53" lengthAdjust="spacingAndGlyphs">Rate</text>
<text x="1415" y="259.2" text-anchor="end" textLength="14.75" lengthAdjust="spacingAndGlyphs">Amt</text>
<text x="1473" y="259.2" textLength="24.44" lengthAdjust="spacingAndGlyphs">Comm</text>
<text x="1580.7" y="259.2" text-anchor="end" textLength="29.99" lengthAdjust="spacingAndGlyphs">Payable</text>
<rect x="363" y="269" width="1228" height="2" fill="#000"/>
<text x="362.6" y="292" textLength="13.85" lengthAdjust="spacingAndGlyphs">555</text>
<text x="391.7" y="292" textLength="20.74" lengthAdjust="spacingAndGlyphs">TKTT</text>
<text x="428.1" y="292" textLength="45.54" lengthAdjust="spacingAndGlyphs">6529011534</text>
<text x="501.9" y="292" textLength="35.98" lengthAdjust="spacingAndGlyphs">03DEC21</text>
<text x="557" y="292" textLength="21.21" lengthAdjust="spacingAndGlyphs">FFVV</text>
<text x="640.2" y="292" textLength="2.31" lengthAdjust="spacingAndGlyphs">I</text>
<text x="668.2" y="293" textLength="11.53" lengthAdjust="spacingAndGlyphs">CA</text>
<text x="769.8" y="292" text-anchor="end" textLength="36.92" lengthAdjust="spacingAndGlyphs">58,092.00</text>
<text x="852.3" y="292" text-anchor="end" textLength="36.92" lengthAdjust="spacingAndGlyphs">49,000.00</text>
<text x="935.7" y="292" text-anchor="end" textLength="32.3" lengthAdjust="spacingAndGlyphs">1,054.00</text>
<text x="1015.2" y="292" text-anchor="end" textLength="32.3" lengthAdjust="spacingAndGlyphs">8,038.00</text>
<text x="1184.1" y="292" text-anchor="end" textLength="36.92" lengthAdjust="spacingAndGlyphs">49,000.00</text>
<text x="1220.9" y="292" text-anchor="end" textLength="16.15" lengthAdjust="spacingAndGlyphs">0.00</text>
<text x="1293.3" y="292" text-anchor="end" textLength="16.15" lengthAdjust="spacingAndGlyphs">1.00</text>
<text x="1331.7" y="292" text-anchor="end" textLength="16.15" lengthAdjust="spacingAndGlyphs">0.00</text>
<text x="1414.3" y="292" text-anchor="end" textLength="16.15" lengthAdjust="spacingAndGlyphs">0.00</text>
<text x="1580.6" y="292" text-anchor="end" textLength="36.92" lengthAdjust="spacingAndGlyphs">58,091.00</text>
<text x="362.6" y="327" textLength="13.85" lengthAdjust="spacingAndGlyphs">555</text>
<text x="391.7" y="327" textLength="20.74" lengthAdjust="spacingAndGlyphs">TKTT</text>
<text x="428.1" y="327" textLength="45.54" lengthAdjust="spacingAndGlyphs">6529011535</text>
<text x="501.9" y="327" textLength="35.98" lengthAdjust="spacingAndGlyphs">03DEC21</text>
<text x="557" y="327" textLength="21.21" lengthAdjust="spacingAndGlyphs">FFVV</text>
<text x="640.2" y="327" textLength="2.31" lengthAdjust="spacingAndGlyphs">I</text>
<text x="668.2" y="328" textLength="11.53" lengthAdjust="spacingAndGlyphs">CA</text>
<text x="769.8" y="327" text-anchor="end" textLength="36.92" lengthAdjust="spacingAndGlyphs">14,792.00</text>
<text x="852.3" y="327" text-anchor="end" textLength="32.3" lengthAdjust="spacingAndGlyphs">9,000.00</text>
<text x="935.7" y="327" text-anchor="end" textLength="32.3" lengthAdjust="spacingAndGlyphs">1,054.00</text>
<text x="1015.2" y="327" text-anchor="end" textLength="32.3" lengthAdjust="spacingAndGlyphs">4,738.00</text>
<text x="1184.1" y="327" text-anchor="end" textLength="32.3" lengthAdjust="spacingAndGlyphs">9,000.00</text>
<text x="1220.9" y="327" text-anchor="end" textLength="16.15" lengthAdjust="spacingAndGlyphs">0.01</text>
<text x="1293.3" y="327" text-anchor="end" textLength="16.15" lengthAdjust="spacingAndGlyphs">1.00</text>
<text x="1331.7" y="327" text-anchor="end" textLength="16.15" lengthAdjust="spacingAndGlyphs">0.00</text>
<text x="1414.3" y="327" text-anchor="end" textLength="16.15" lengthAdjust="spacingAndGlyphs">0.00</text>
<text x="1580.6" y="327" text-anchor="end" textLength="36.92" lengthAdjust="spacingAndGlyphs">14,791.00</text>
<text x="362.6" y="363" textLength="13.85" lengthAdjust="spacingAndGlyphs">555</text>
<text x="391.7" y="363" textLength="20.74" lengthAdjust="spacingAndGlyphs">TKTT</text>
<text x="428.1" y="363" textLength="45.54" lengthAdjust="spacingAndGlyphs">6529011536</text>
<text x="501.9" y="363" textLength="35.98" lengthAdjust="spacingAndGlyphs">03DEC21</text>
<text x="557" y="363" textLength="21.21" lengthAdjust="spacingAndGlyphs">FFVV</text>
<text x="640.2" y="363" textLength="2.31" lengthAdjust="spacingAndGlyphs">I</text>
<text x="668.2" y="364" textLength="11.53" lengthAdjust="spacingAndGlyphs">CA</text>
<text x="769.8" y="363" text-anchor="end" textLength="36.92" lengthAdjust="spacingAndGlyphs">14,792.00</text>
<text x="852.3" y="363" text-anchor="end" textLength="32.3" lengthAdjust="spacingAndGlyphs">9,000.00</text>
<text x="935.7" y="363" text-anchor="end" textLength="32.3" lengthAdjust="spacingAndGlyphs">1,054.00</text>
<text x="1015.2" y="363" text-anchor="end" textLength="32.3" lengthAdjust="spacingAndGlyphs">4,738.00</text>
<text x="1184.1" y="363" text-anchor="end" textLength="32.3" lengthAdjust="spacingAndGlyphs">9,000.00</text>
<text x="1220.9" y="363" text-anchor="end" textLength="16.15" lengthAdjust="spacingAndGlyphs">0.01</text>
<text x="1293.3" y="363" text-anchor="end" textLength="16.15" lengthAdjust="spacingAndGlyphs">1.00</text>
<text x="1331.7" y="363" text-anchor="end" textLength="16.15" lengthAdjust="spacingAndGlyphs">0.00</text>
<text x="1414.3" y="363" text-anchor="end" textLength="16.15" lengthAdjust="spacingAndGlyphs">0.00</text>
<text x="1580.6" y="363" text-anchor="end" textLength="36.92" lengthAdjust="spacingAndGlyphs">14,791.00</text>
<text x="362.6" y="398" textLength="13.85" lengthAdjust="spacingAndGlyphs">555</text>
<text x="391.7" y="398" textLength="20.74" lengthAdjust="spacingAndGlyphs">TKTT</text>
<text x="428.1" y="398" textLength="45.54" lengthAdjust="spacingAndGlyphs">6529011537</text>
<text x="501.9" y="398" textLength="35.98" lengthAdjust="spacingAndGlyphs">03DEC21</text>
<text x="557" y="398" textLength="21.21" lengthAdjust="spacingAndGlyphs">FFVV</text>
<text x="640.2" y="398" textLength="2.31" lengthAdjust="spacingAndGlyphs">I</text>
<text x="668.2" y="399" textLength="11.53" lengthAdjust="spacingAndGlyphs">CA</text>
<text x="769.8" y="398" text-anchor="end" textLength="36.92" lengthAdjust="spacingAndGlyphs">14,792.00</text>
<text x="852.3" y="398" text-anchor="end" textLength="32.3" lengthAdjust="spacingAndGlyphs">9,000.00</text>
<text x="935.7" y="398" text-anchor="end" textLength="32.3" lengthAdjust="spacingAndGlyphs">1,054.00</text>
<text x="1015.2" y="398" text-anchor="end" textLength="32.3" lengthAdjust="spacingAndGlyphs">4,738.00</text>
<text x="1184.1" y="398" text-anchor="end" textLength="32.3" lengthAdjust="spacingAndGlyphs">9,000.00</text>
<text x="1220.9" y="398" text-anchor="end" textLength="16.15" lengthAdjust="spacingAndGlyphs">0.01</text>
<text x="1293.3" y="398" text-anchor="end" textLength="16.15" lengthAdjust="spacingAndGlyphs">1.00</text>
<text x="1331.7" y="398" text-anchor="end" textLength="16.15" lengthAdjust="spacingAndGlyphs">0.00</text>
<text x="1414.3" y="398" text-anchor="end" textLength="16.15" lengthAdjust="spacingAndGlyphs">0.00</text>
<text x="1580.6" y="398" text-anchor="end" textLength="36.92" lengthAdjust="spacingAndGlyphs">14,791.00</text>
<text x="362.6" y="433" textLength="13.85" lengthAdjust="spacingAndGlyphs">555</text>
<text x="391.7" y="433" textLength="20.74" lengthAdjust="spacingAndGlyphs">TKTT</text>
<text x="428.1" y="433" textLength="45.54" lengthAdjust="spacingAndGlyphs">6529011538</text>
<text x="501.9" y="433" textLength="35.98" lengthAdjust="spacingAndGlyphs">04DEC21</text>
<text x="557" y="433" textLength="21.21" lengthAdjust="spacingAndGlyphs">FFVV</text>
<text x="640.2" y="433" textLength="5.99" lengthAdjust="spacingAndGlyphs">D</text>
<text x="668.2" y="434" textLength="11.53" lengthAdjust="spacingAndGlyphs">CA</text>
<text x="769.8" y="433" text-anchor="end" textLength="36.92" lengthAdjust="spacingAndGlyphs">16,048.00</text>
<text x="852.3" y="433" text-anchor="end" textLength="36.92" lengthAdjust="spacingAndGlyphs">10,500.00</text>
<text x="935.7" y="433" text-anchor="end" textLength="25.38" lengthAdjust="spacingAndGlyphs">810.00</text>
<text x="1015.2" y="433" text-anchor="end" textLength="32.3" lengthAdjust="spacingAndGlyphs">4,738.00</text>
<text x="1184.1" y="433" text-anchor="end" textLength="36.92" lengthAdjust="spacingAndGlyphs">10,500.00</text>
<text x="1220.9" y="433" text-anchor="end" textLength="16.15" lengthAdjust="spacingAndGlyphs">0.01</text>
<text x="1293.3" y="433" text-anchor="end" textLength="16.15" lengthAdjust="spacingAndGlyphs">1.00</text>
<text x="1331.7" y="433" text-anchor="end" textLength="16.15" lengthAdjust="spacingAndGlyphs">0.00</text>
<text x="1414.3" y="433" text-anchor="end" textLength="16.15" lengthAdjust="spacingAndGlyphs">0.00</text>
<text x="1580.6" y="433" text-anchor="end" textLength="36.92" lengthAdjust="spacingAndGlyphs">16,047.00</text>
<text x="362.6" y="469" textLength="13.85" lengthAdjust="spacingAndGlyphs">555</text>
<text x="391.7" y="469" textLength="20.74" lengthAdjust="spacingAndGlyphs">TKTT</text>
<text x="428.1" y="469" textLength="45.54" lengthAdjust="spacingAndGlyphs">6529011539</text>
<text x="501.9" y="469" textLength="35.98" lengthAdjust="spacingAndGlyphs">04DEC21</text>
<text x="557" y="469" textLength="21.68" lengthAdjust="spacingAndGlyphs">FVVV</text>
<text x="640.2" y="469" textLength="5.99" lengthAdjust="spacingAndGlyphs">D</text>
<text x="668.2" y="470" textLength="11.53" lengthAdjust="spacingAndGlyphs">CA</text>
<text x="769.8" y="469" text-anchor="end" textLength="32.3" lengthAdjust="spacingAndGlyphs">4,410.00</text>
<text x="852.3" y="469" text-anchor="end" textLength="32.3" lengthAdjust="spacingAndGlyphs">1,740.00</text>
<text x="935.7" y="469" text-anchor="end" textLength="25.38" lengthAdjust="spacingAndGlyphs">301.00</text>
<text x="1015.2" y="469" text-anchor="end" textLength="32.3" lengthAdjust="spacingAndGlyphs">2,369.00</text>
<text x="1184.1" y="469" text-anchor="end" textLength="32.3" lengthAdjust="spacingAndGlyphs">1,740.00</text>
<text x="1220.9" y="469" text-anchor="end" textLength="16.15" lengthAdjust="spacingAndGlyphs">0.06</text>
<text x="1293.3" y="469" text-anchor="end" textLength="16.15" lengthAdjust="spacingAndGlyphs">1.00</text>
<text x="1331.7" y="469" text-anchor="end" textLength="16.15" lengthAdjust="spacingAndGlyphs">0.00</text>
<text x="1414.3" y="469" text-anchor="end" textLength="16.15" lengthAdjust="spacingAndGlyphs">0.00</text>
<text x="1580.6" y="469" text-anchor="end" textLength="32.3" lengthAdjust="spacingAndGlyphs">4,409.00</text>
<text x="362.6" y="504" textLength="13.85" lengthAdjust="spacingAndGlyphs">555</text>
<text x="391.7" y="504" textLength="20.74" lengthAdjust="spacingAndGlyphs">TKTT</text>
<text x="428.1" y="504" textLength="45.54" lengthAdjust="spacingAndGlyphs">6529011540</text>
<text x="501.9" y="504" textLength="35.98" lengthAdjust="spacingAndGlyphs">05DEC21</text>
<text x="557" y="504" textLength="21.68" lengthAdjust="spacingAndGlyphs">FVVV</text>
<text x="640.2" y="504" textLength="5.99" lengthAdjust="spacingAndGlyphs">D</text>
<text x="668.2" y="505" textLength="11.53" lengthAdjust="spacingAndGlyphs">CA</text>
<text x="769.8" y="504" text-anchor="end" textLength="32.3" lengthAdjust="spacingAndGlyphs">5,274.00</text>
<text x="852.3" y="504" text-anchor="end" textLength="32.3" lengthAdjust="spacingAndGlyphs">2,500.00</text>
<text x="935.7" y="504" text-anchor="end" textLength="25.38" lengthAdjust="spacingAndGlyphs">405.00</text>
<text x="1015.2" y="504" text-anchor="end" textLength="32.3" lengthAdjust="spacingAndGlyphs">2,369.00</text>
<text x="1184.1" y="504" text-anchor="end" textLength="32.3" lengthAdjust="spacingAndGlyphs">2,500.00</text>
<text x="1220.9" y="504" text-anchor="end" textLength="16.15" lengthAdjust="spacingAndGlyphs">0.04</text>
<text x="1293.3" y="504" text-anchor="end" textLength="16.15" lengthAdjust="spacingAndGlyphs">1.00</text>
<text x="1331.7" y="504" text-anchor="end" textLength="16.15" lengthAdjust="spacingAndGlyphs">0.00</text>
<text x="1414.3" y="504" text-anchor="end" textLength="16.15" lengthAdjust="spacingAndGlyphs">0.00</text>
<text x="1580.6" y="504" text-anchor="end" textLength="32.3" lengthAdjust="spacingAndGlyphs">5,273.00</text>
<text x="362.6" y="539" textLength="13.85" lengthAdjust="spacingAndGlyphs">555</text>
<text x="391.7" y="539" textLength="20.74" lengthAdjust="spacingAndGlyphs">TKTT</text>
<text x="428.1" y="539" textLength="45.54" lengthAdjust="spacingAndGlyphs">6529011541</text>
<text x="501.9" y="539" textLength="35.98" lengthAdjust="spacingAndGlyphs">06DEC21</text>
<text x="557" y="539" textLength="21.21" lengthAdjust="spacingAndGlyphs">FFVV</text>
<text x="640.2" y="539" textLength="2.31" lengthAdjust="spacingAndGlyphs">I</text>
<text x="668.2" y="540" textLength="11.53" lengthAdjust="spacingAndGlyphs">CA</text>
<text x="769.8" y="539" text-anchor="end" textLength="36.92" lengthAdjust="spacingAndGlyphs">52,196.00</text>
<text x="852.3" y="539" text-anchor="end" textLength="36.92" lengthAdjust="spacingAndGlyphs">39,125.00</text>
<text x="935.7" y="539" text-anchor="end" textLength="32.3" lengthAdjust="spacingAndGlyphs">3,013.00</text>
<text x="1015.2" y="539" text-anchor="end" textLength="36.92" lengthAdjust="spacingAndGlyphs">10,058.00</text>
<text x="1184.1" y="539" text-anchor="end" textLength="36.92" lengthAdjust="spacingAndGlyphs">39,125.00</text>
<text x="1220.9" y="539" text-anchor="end" textLength="16.15" lengthAdjust="spacingAndGlyphs">0.00</text>
<text x="1293.3" y="539" text-anchor="end" textLength="16.15" lengthAdjust="spacingAndGlyphs">1.00</text>
<text x="1331.7" y="539" text-anchor="end" textLength="16.15" lengthAdjust="spacingAndGlyphs">0.00</text>
<text x="1414.3" y="539" text-anchor="end" textLength="16.15" lengthAdjust="spacingAndGlyphs">0.00</text>
<text x="1580.6" y="539" text-anchor="end" textLength="36.92" lengthAdjust="spacingAndGlyphs">52,195.00</text>
<text x="362.6" y="575" textLength="13.85" lengthAdjust="spacingAndGlyphs">555</text>
<text x="391.7" y="575" textLength="20.74" lengthAdjust="spacingAndGlyphs">TKTT</text>
<text x="428.1" y="575" textLength="45.54" lengthAdjust="spacingAndGlyphs">6529011542</text>
<text x="501.9" y="575" textLength="35.98" lengthAdjust="spacingAndGlyphs">06DEC21</text>
<text x="557" y="575" textLength="21.21" lengthAdjust="spacingAndGlyphs">FFVV</text>
<text x="640.2" y="575" textLength="2.31" lengthAdjust="spacingAndGlyphs">I</text>
<text x="668.2" y="576" textLength="11.53" lengthAdjust="spacingAndGlyphs">CA</text>
<text x="769.8" y="575" text-anchor="end" textLength="36.92" lengthAdjust="spacingAndGlyphs">42,162.00</text>
<text x="852.3" y="575" text-anchor="end" textLength="36.92" lengthAdjust="spacingAndGlyphs">29,325.00</text>
<text x="935.7" y="575" text-anchor="end" textLength="32.3" lengthAdjust="spacingAndGlyphs">2,779.00</text>
<text x="1015.2" y="575" text-anchor="end" textLength="36.92" lengthAdjust="spacingAndGlyphs">10,058.00</text>
<text x="1184.1" y="575" text-anchor="end" textLength="36.92" lengthAdjust="spacingAndGlyphs">29,325.00</text>
<text x="1220.9" y="575" text-anchor="end" textLength="16.15" lengthAdjust="spacingAndGlyphs">0.00</text>
<text x="1293.3" y="575" text-anchor="end" textLength="16.15" lengthAdjust="spacingAndGlyphs">1.00</text>
<text x="1331.7" y="575" text-anchor="end" textLength="16.15" lengthAdjust="spacingAndGlyphs">0.00</text>
<text x="1414.3" y="575" text-anchor="end" textLength="16.15" lengthAdjust="spacingAndGlyphs">0.00</text>
<text x="1580.6" y="575" text-anchor="end" textLength="36.92" lengthAdjust="spacingAndGlyphs">42,161.00</text>
<text x="362.6" y="610" textLength="13.85" lengthAdjust="spacingAndGlyphs">555</text>
<text x="391.7" y="610" textLength="20.74" lengthAdjust="spacingAndGlyphs">TKTT</text>
<text x="428.1" y="610" textLength="45.54" lengthAdjust="spacingAndGlyphs">6529011543</text>
<text x="501.9" y="610" textLength="35.98" lengthAdjust="spacingAndGlyphs">06DEC21</text>
<text x="557" y="610" textLength="21.21" lengthAdjust="spacingAndGlyphs">FFVV</text>
<text x="640.2" y="610" textLength="2.31" lengthAdjust="spacingAndGlyphs">I</text>
<text x="668.2" y="611" textLength="11.53" lengthAdjust="spacingAndGlyphs">CA</text>
<text x="769.8" y="610" text-anchor="end" textLength="36.92" lengthAdjust="spacingAndGlyphs">52,196.00</text>
<text x="852.3" y="610" text-anchor="end" textLength="36.92" lengthAdjust="spacingAndGlyphs">39,125.00</text>
<text x="935.7" y="610" text-anchor="end" textLength="32.3" lengthAdjust="spacingAndGlyphs">3,013.00</text>
<text x="1015.2" y="610" text-anchor="end" textLength="36.92" lengthAdjust="spacingAndGlyphs">10,058.00</text>
<text x="1184.1" y="610" text-anchor="end" textLength="36.92" lengthAdjust="spacingAndGlyphs">39,125.00</text>
<text x="1220.9" y="610" text-anchor="end" textLength="16.15" lengthAdjust="spacingAndGlyphs">0.00</text>
<text x="1293.3" y="610" text-anchor="end" textLength="16.15" lengthAdjust="spacingAndGlyphs">1.00</text>
<text x="1331.7" y="610" text-anchor="end" textLength="16.15" lengthAdjust="spacingAndGlyphs">0.00</text>
<text x="1414.3" y="610" text-anchor="end" textLength="16.15" lengthAdjust="spacingAndGlyphs">0.00</text>
<text x="1580.6" y="610" text-anchor="end" textLength="36.92" lengthAdjust="spacingAndGlyphs">52,195.00</text>
<text x="362.6" y="645" textLength="13.85" lengthAdjust="spacingAndGlyphs">555</text>
<text x="391.7" y="645" textLength="20.74" lengthAdjust="spacingAndGlyphs">TKTT</text>
<text x="428.1" y="645" textLength="45.54" lengthAdjust="spacingAndGlyphs">6529011544</text>
<text x="501.9" y="645" textLength="35.98" lengthAdjust="spacingAndGlyphs">06DEC21</text>
<text x="557" y="645" textLength="21.21" lengthAdjust="spacingAndGlyphs">FFVV</text>
<text x="640.2" y="645" textLength="2.31" lengthAdjust="spacingAndGlyphs">I</text>
<text x="668.2" y="646" textLength="11.53" lengthAdjust="spacingAndGlyphs">CA</text>
<text x="769.8" y="645" text-anchor="end" textLength="36.92" lengthAdjust="spacingAndGlyphs">60,646.00</text>
<text x="852.3" y="645" text-anchor="end" textLength="36.92" lengthAdjust="spacingAndGlyphs">47,575.00</text>
<text x="935.7" y="645" text-anchor="end" textLength="32.3" lengthAdjust="spacingAndGlyphs">3,013.00</text>
<text x="1015.2" y="645" text-anchor="end" textLength="36.92" lengthAdjust="spacingAndGlyphs">10,058.00</text>
<text x="1184.1" y="645" text-anchor="end" textLength="36.92" lengthAdjust="spacingAndGlyphs">47,575.00</text>
<text x="1220.9" y="645" text-anchor="end" textLength="16.15" lengthAdjust="spacingAndGlyphs">0.00</text>
<text x="1293.3" y="645" text-anchor="end" textLength="16.15" lengthAdjust="spacingAndGlyphs">1.00</text>
<text x="1331.7" y="645" text-anchor="end" textLength="16.15" lengthAdjust="spacingAndGlyphs">0.00</text>
<text x="1414.3" y="645" text-anchor="end" textLength="16.15" lengthAdjust="spacingAndGlyphs">0.00</text>
<text x="1580.6" y="645" text-anchor="end" textLength="36.92" lengthAdjust="spacingAndGlyphs">60,645.00</text>
<text x="362.6" y="681" textLength="13.85" lengthAdjust="spacingAndGlyphs">555</text>
<text x="391.7" y="681" textLength="20.74" lengthAdjust="spacingAndGlyphs">TKTT</text>
<text x="428.1" y="681" textLength="45.54" lengthAdjust="spacingAndGlyphs">6529011545</text>
<text x="501.9" y="681" textLength="35.98" lengthAdjust="spacingAndGlyphs">06DEC21</text>
<text x="557" y="681" textLength="21.21" lengthAdjust="spacingAndGlyphs">FFVV</text>
<text x="640.2" y="681" textLength="2.31" lengthAdjust="spacingAndGlyphs">I</text>
<text x="668.2" y="682" textLength="11.53" lengthAdjust="spacingAndGlyphs">CA</text>
<text x="769.8" y="681" text-anchor="end" textLength="36.92" lengthAdjust="spacingAndGlyphs">14,792.00</text>
<text x="852.3" y="681" text-anchor="end" textLength="32.3" lengthAdjust="spacingAndGlyphs">9,000.00</text>
<text x="935.7" y="681" text-anchor="end" textLength="32.3" lengthAdjust="spacingAndGlyphs">1,054.00</text>
<text x="1015.2" y="681" text-anchor="end" textLength="32.3" lengthAdjust="spacingAndGlyphs">4,738.00</text>
<text x="1184.1" y="681" text-anchor="end" textLength="32.3" lengthAdjust="spacingAndGlyphs">9,000.00</text>
<text x="1220.9" y="681" text-anchor="end" textLength="16.15" lengthAdjust="spacingAndGlyphs">0.01</text>
<text x="1293.3" y="681" text-anchor="end" textLength="16.15" lengthAdjust="spacingAndGlyphs">1.00</text>
<text x="1331.7" y="681" text-anchor="end" textLength="16.15" lengthAdjust="spacingAndGlyphs">0.00</text>
<text x="1414.3" y="681" text-anchor="end" textLength="16.15" lengthAdjust="spacingAndGlyphs">0.00</text>
<text x="1580.6" y="681" text-anchor="end" textLength="36.92" lengthAdjust="spacingAndGlyphs">14,791.00</text>
<text x="362.6" y="716" textLength="13.85" lengthAdjust="spacingAndGlyphs">555</text>
<text x="391.7" y="716" textLength="20.74" lengthAdjust="spacingAndGlyphs">TKTT</text>
<text x="428.1" y="716" textLength="45.54" lengthAdjust="spacingAndGlyphs">6529011546</text>
<text x="501.9" y="716" textLength="35.98" lengthAdjust="spacingAndGlyphs">06DEC21</text>
<text x="557" y="716" textLength="21.21" lengthAdjust="spacingAndGlyphs">FFVV</text>
<text x="640.2" y="716" textLength="2.31" lengthAdjust="spacingAndGlyphs">I</text>
<text x="668.2" y="717" textLength="11.53" lengthAdjust="spacingAndGlyphs">CA</text>
<text x="769.8" y="716" text-anchor="end" textLength="36.92" lengthAdjust="spacingAndGlyphs">14,792.00</text>
<text x="852.3" y="716" text-anchor="end" textLength="32.3" lengthAdjust="spacingAndGlyphs">9,000.00</text>
<text x="935.7" y="716" text-anchor="end" textLength="32.3" lengthAdjust="spacingAndGlyphs">1,054.00</text>
<text x="1015.2" y="716" text-anchor="end" textLength="32.3" lengthAdjust="spacingAndGlyphs">4,738.00</text>
<text x="1184.1" y="716" text-anchor="end" textLength="32.3" lengthAdjust="spacingAndGlyphs">9,000.00</text>
<text x="1220.9" y="716" text-anchor="end" textLength="16.15" lengthAdjust="spacingAndGlyphs">0.01</text>
<text x="1293.3" y="716" text-anchor="end" textLength="16.15" lengthAdjust="spacingAndGlyphs">1.00</text>
<text x="1331.7" y="716" text-anchor="end" textLength="16.15" lengthAdjust="spacingAndGlyphs">0.00</text>
<text x="1414.3" y="716" text-anchor="end" textLength="16.15" lengthAdjust="spacingAndGlyphs">0.00</text>
<text x="1580.6" y="716" text-anchor="end" textLength="36.92" lengthAdjust="spacingAndGlyphs">14,791.00</text>
<text x="362.6" y="751" textLength="13.85" lengthAdjust="spacingAndGlyphs">555</text>
<text x="391.7" y="751" textLength="20.74" lengthAdjust="spacingAndGlyphs">TKTT</text>
<text x="428.1" y="751" textLength="45.54" lengthAdjust="spacingAndGlyphs">6529011547</text>
<text x="501.9" y="751" textLength="35.98" lengthAdjust="spacingAndGlyphs">06DEC21</text>
<text x="557" y="751" textLength="21.21" lengthAdjust="spacingAndGlyphs">FFVV</text>
<text x="640.2" y="751" textLength="2.31" lengthAdjust="spacingAndGlyphs">I</text>
<text x="668.2" y="752" textLength="11.53" lengthAdjust="spacingAndGlyphs">CA</text>
<text x="769.8" y="751" text-anchor="end" textLength="36.92" lengthAdjust="spacingAndGlyphs">14,792.00</text>
<text x="852.3" y="751" text-anchor="end" textLength="32.3" lengthAdjust="spacingAndGlyphs">9,000.00</text>
<text x="935.7" y="751" text-anchor="end" textLength="32.3" lengthAdjust="spacingAndGlyphs">1,054.00</text>
<text x="1015.2" y="751" text-anchor="end" textLength="32.3" lengthAdjust="spacingAndGlyphs">4,738.00</text>
<text x="1184.1" y="751" text-anchor="end" textLength="32.3" lengthAdjust="spacingAndGlyphs">9,000.00</text>
<text x="1220.9" y="751" text-anchor="end" textLength="16.15" lengthAdjust="spacingAndGlyphs">0.01</text>
<text x="1293.3" y="751" text-anchor="end" textLength="16.15" lengthAdjust="spacingAndGlyphs">1.00</text>
<text x="1331.7" y="751" text-anchor="end" textLength="16.15" lengthAdjust="spacingAndGlyphs">0.00</text>
<text x="1414.3" y="751" text-anchor="end" textLength="16.15" lengthAdjust="spacingAndGlyphs">0.00</text>
<text x="1580.6" y="751" text-anchor="end" textLength="36.92" lengthAdjust="spacingAndGlyphs">14,791.00</text>
<text x="362.6" y="787" textLength="13.85" lengthAdjust="spacingAndGlyphs">555</text>
<text x="391.7" y="787" textLength="20.74" lengthAdjust="spacingAndGlyphs">TKTT</text>
<text x="428.1" y="787" textLength="45.54" lengthAdjust="spacingAndGlyphs">6529011548</text>
<text x="501.9" y="787" textLength="35.98" lengthAdjust="spacingAndGlyphs">06DEC21</text>
<text x="557" y="787" textLength="21.21" lengthAdjust="spacingAndGlyphs">FFVV</text>
<text x="640.2" y="787" textLength="2.31" lengthAdjust="spacingAndGlyphs">I</text>
<text x="668.2" y="788" textLength="11.53" lengthAdjust="spacingAndGlyphs">CA</text>
<text x="769.8" y="787" text-anchor="end" textLength="36.92" lengthAdjust="spacingAndGlyphs">14,792.00</text>
<text x="852.3" y="787" text-anchor="end" textLength="32.3" lengthAdjust="spacingAndGlyphs">9,000.00</text>
<text x="935.7" y="787" text-anchor="end" textLength="32.3" lengthAdjust="spacingAndGlyphs">1,054.00</text>
<text x="1015.2" y="787" text-anchor="end" textLength="32.3" lengthAdjust="spacingAndGlyphs">4,738.00</text>
<text x="1184.1" y="787" text-anchor="end" textLength="32.3" lengthAdjust="spacingAndGlyphs">9,000.00</text>
<text x="1220.9" y="787" text-anchor="end" textLength="16.15" lengthAdjust="spacingAndGlyphs">0.01</text>
<text x="1293.3" y="787" text-anchor="end" textLength="16.15" lengthAdjust="spacingAndGlyphs">1.00</text>
<text x="1331.7" y="787" text-anchor="end" textLength="16.15" lengthAdjust="spacingAndGlyphs">0.00</text>
<text x="1414.3" y="787" text-anchor="end" textLength="16.15" lengthAdjust="spacingAndGlyphs">0.00</text>
<text x="1580.6" y="787" text-anchor="end" textLength="36.92" lengthAdjust="spacingAndGlyphs">14,791.00</text>
<text x="362.6" y="822" textLength="13.85" lengthAdjust="spacingAndGlyphs">555</text>
<text x="391.7" y="822" textLength="20.74" lengthAdjust="spacingAndGlyphs">TKTT</text>
<text x="428.1" y="822" textLength="45.54" lengthAdjust="spacingAndGlyphs">6529011549</text>
<text x="501.9" y="822" textLength="35.98" lengthAdjust="spacingAndGlyphs">06DEC21</text>
<text x="557" y="822" textLength="21.21" lengthAdjust="spacingAndGlyphs">FFVV</text>
<text x="640.2" y="822" textLength="2.31" lengthAdjust="spacingAndGlyphs">I</text>
<text x="668.2" y="823" textLength="11.53" lengthAdjust="spacingAndGlyphs">CA</text>
<text x="769.8" y="822" text-anchor="end" textLength="36.92" lengthAdjust="spacingAndGlyphs">14,792.00</text>
<text x="852.3" y="822" text-anchor="end" textLength="32.3" lengthAdjust="spacingAndGlyphs">9,000.00</text>
<text x="935.7" y="822" text-anchor="end" textLength="32.3" lengthAdjust="spacingAndGlyphs">1,054.00</text>
<text x="1015.2" y="822" text-anchor="end" textLength="32.3" lengthAdjust="spacingAndGlyphs">4,738.00</text>
<text x="1184.1" y="822" text-anchor="end" textLength="32.3" lengthAdjust="spacingAndGlyphs">9,000.00</text>
<text x="1220.9" y="822" text-anchor="end" textLength="16.15" lengthAdjust="spacingAndGlyphs">0.01</text>
<text x="1293.3" y="822" text-anchor="end" textLength="16.15" lengthAdjust="spacingAndGlyphs">1.00</text>
<text x="1331.7" y="822" text-anchor="end" textLength="16.15" lengthAdjust="spacingAndGlyphs">0.00</text>
<text x="1414.3" y="822" text-anchor="end" textLength="16.15" lengthAdjust="spacingAndGlyphs">0.00</text>
<text x="1580.6" y="822" text-anchor="end" textLength="36.92" lengthAdjust="spacingAndGlyphs">14,791.00</text>
<text x="362.6" y="857" textLength="13.85" lengthAdjust="spacingAndGlyphs">555</text>
<text x="391.7" y="857" textLength="20.74" lengthAdjust="spacingAndGlyphs">TKTT</text>
<text x="428.1" y="857" textLength="45.54" lengthAdjust="spacingAndGlyphs">6529011550</text>
<text x="501.9" y="857" textLength="35.98" lengthAdjust="spacingAndGlyphs">06DEC21</text>
<text x="557" y="857" textLength="21.21" lengthAdjust="spacingAndGlyphs">FFVV</text>
<text x="640.2" y="857" textLength="2.31" lengthAdjust="spacingAndGlyphs">I</text>
<text x="668.2" y="858" textLength="11.53" lengthAdjust="spacingAndGlyphs">CA</text>
<text x="769.8" y="857" text-anchor="end" textLength="36.92" lengthAdjust="spacingAndGlyphs">14,792.00</text>
<text x="852.3" y="857" text-anchor="end" textLength="32.3" lengthAdjust="spacingAndGlyphs">9,000.00</text>
<text x="935.7" y="857" text-anchor="end" textLength="32.3" lengthAdjust="spacingAndGlyphs">1,054.00</text>
<text x="1015.2" y="857" text-anchor="end" textLength="32.3" lengthAdjust="spacingAndGlyphs">4,738.00</text>
<text x="1184.1" y="857" text-anchor="end" textLength="32.3" lengthAdjust="spacingAndGlyphs">9,000.00</text>
<text x="1220.9" y="857" text-anchor="end" textLength="16.15" lengthAdjust="spacingAndGlyphs">0.01</text>
<text x="1293.3" y="857" text-anchor="end" textLength="16.15" lengthAdjust="spacingAndGlyphs">1.00</text>
<text x="1331.7" y="857" text-anchor="end" textLength="16.15" lengthAdjust="spacingAndGlyphs">0.00</text>
<text x="1414.3" y="857" text-anchor="end" textLength="16.15" lengthAdjust="spacingAndGlyphs">0.00</text>
<text x="1580.6" y="857" text-anchor="end" textLength="36.92" lengthAdjust="spacingAndGlyphs">14,791.00</text>
<text x="362.6" y="893" textLength="13.85" lengthAdjust="spacingAndGlyphs">555</text>
<text x="391.7" y="893" textLength="20.74" lengthAdjust="spacingAndGlyphs">TKTT</text>
<text x="428.1" y="893" textLength="45.54" lengthAdjust="spacingAndGlyphs">6529011551</text>
<text x="501.9" y="893" textLength="35.98" lengthAdjust="spacingAndGlyphs">06DEC21</text>
<text x="557" y="893" textLength="21.21" lengthAdjust="spacingAndGlyphs">FFVV</text>
<text x="640.2" y="893" textLength="2.31" lengthAdjust="spacingAndGlyphs">I</text>
<text x="668.2" y="894" textLength="11.53" lengthAdjust="spacingAndGlyphs">CA</text>
<text x="769.8" y="893" text-anchor="end" textLength="36.92" lengthAdjust="spacingAndGlyphs">14,792.00</text>
<text x="852.3" y="893" text-anchor="end" textLength="32.3" lengthAdjust="spacingAndGlyphs">9,000.00</text>
<text x="935.7" y="893" text-anchor="end" textLength="32.3" lengthAdjust="spacingAndGlyphs">1,054.00</text>
<text x="1015.2" y="893" text-anchor="end" textLength="32.3" lengthAdjust="spacingAndGlyphs">4,738.00</text>
<text x="1184.1" y="893" text-anchor="end" textLength="32.3" lengthAdjust="spacingAndGlyphs">9,000.00</text>
<text x="1220.9" y="893" text-anchor="end" textLength="16.15" lengthAdjust="spacingAndGlyphs">0.01</text>
<text x="1293.3" y="893" text-anchor="end" textLength="16.15" lengthAdjust="spacingAndGlyphs">1.00</text>
<text x="1331.7" y="893" text-anchor="end" textLength="16.15" lengthAdjust="spacingAndGlyphs">0.00</text>
<text x="1414.3" y="893" text-anchor="end" textLength="16.15" lengthAdjust="spacingAndGlyphs">0.00</text>
<text x="1580.6" y="893" text-anchor="end" textLength="36.92" lengthAdjust="spacingAndGlyphs">14,791.00</text>
<text x="362.6" y="928" textLength="13.85" lengthAdjust="spacingAndGlyphs">555</text>
<text x="391.7" y="928" textLength="20.74" lengthAdjust="spacingAndGlyphs">TKTT</text>
<text x="428.1" y="928" textLength="45.54" lengthAdjust="spacingAndGlyphs">6529011552</text>
<text x="501.9" y="928" textLength="35.98" lengthAdjust="spacingAndGlyphs">06DEC21</text>
<text x="557" y="928" textLength="21.21" lengthAdjust="spacingAndGlyphs">FFVV</text>
<text x="640.2" y="928" textLength="2.31" lengthAdjust="spacingAndGlyphs">I</text>
<text x="668.2" y="929" textLength="11.53" lengthAdjust="spacingAndGlyphs">CA</text>
<text x="769.8" y="928" text-anchor="end" textLength="36.92" lengthAdjust="spacingAndGlyphs">14,792.00</text>
<text x="852.3" y="928" text-anchor="end" textLength="32.3" lengthAdjust="spacingAndGlyphs">9,000.00</text>
<text x="935.7" y="928" text-anchor="end" textLength="32.3" lengthAdjust="spacingAndGlyphs">1,054.00</text>
<text x="1015.2" y="928" text-anchor="end" textLength="32.3" lengthAdjust="spacingAndGlyphs">4,738.00</text>
<text x="1184.1" y="928" text-anchor="end" textLength="32.3" lengthAdjust="spacingAndGlyphs">9,000.00</text>
<text x="1220.9" y="928" text-anchor="end" textLength="16.15" lengthAdjust="spacingAndGlyphs">0.01</text>
<text x="1293.3" y="928" text-anchor="end" textLength="16.15" lengthAdjust="spacingAndGlyphs">1.00</text>
<text x="1331.7" y="928" text-anchor="end" textLength="16.15" lengthAdjust="spacingAndGlyphs">0.00</text>
<text x="1414.3" y="928" text-anchor="end" textLength="16.15" lengthAdjust="spacingAndGlyphs">0.00</text>
<text x="1580.6" y="928" text-anchor="end" textLength="36.92" lengthAdjust="spacingAndGlyphs">14,791.00</text>
<text x="362.6" y="963" textLength="13.85" lengthAdjust="spacingAndGlyphs">555</text>
<text x="391.7" y="963" textLength="20.74" lengthAdjust="spacingAndGlyphs">TKTT</text>
<text x="428.1" y="963" textLength="45.54" lengthAdjust="spacingAndGlyphs">6529011553</text>
<text x="501.9" y="963" textLength="35.98" lengthAdjust="spacingAndGlyphs">06DEC21</text>
<text x="557" y="963" textLength="21.21" lengthAdjust="spacingAndGlyphs">FFVV</text>
<text x="640.2" y="963" textLength="2.31" lengthAdjust="spacingAndGlyphs">I</text>
<text x="668.2" y="964" textLength="11.53" lengthAdjust="spacingAndGlyphs">CA</text>
<text x="769.8" y="963" text-anchor="end" textLength="36.92" lengthAdjust="spacingAndGlyphs">14,792.00</text>
<text x="852.3" y="963" text-anchor="end" textLength="32.3" lengthAdjust="spacingAndGlyphs">9,000.00</text>
<text x="935.7" y="963" text-anchor="end" textLength="32.3" lengthAdjust="spacingAndGlyphs">1,054.00</text>
<text x="1015.2" y="963" text-anchor="end" textLength="32.3" lengthAdjust="spacingAndGlyphs">4,738.00</text>
<text x="1184.1" y="963" text-anchor="end" textLength="32.3" lengthAdjust="spacingAndGlyphs">9,000.00</text>
<text x="1220.9" y="963" text-anchor="end" textLength="16.15" lengthAdjust="spacingAndGlyphs">0.01</text>
<text x="1293.3" y="963" text-anchor="end" textLength="16.15" lengthAdjust="spacingAndGlyphs">1.00</text>
<text x="1331.7" y="963" text-anchor="end" textLength="16.15" lengthAdjust="spacingAndGlyphs">0.00</text>
<text x="1414.3" y="963" text-anchor="end" textLength="16.15" lengthAdjust="spacingAndGlyphs">0.00</text>
<text x="1580.6" y="963" text-anchor="end" textLength="36.92" lengthAdjust="spacingAndGlyphs">14,791.00</text>
<rect x="363" y="982" width="1226" height="26" fill="none" stroke="#000" stroke-width="2"/>
<text x="372" y="999.8" font-size="12.2" textLength="74.6" lengthAdjust="spacingAndGlyphs">08-DEC-2021</text>
<text x="461" y="999.8" font-size="12.2" textLength="66.5" lengthAdjust="spacingAndGlyphs">02:45:10PM</text>
<text x="1506.5" y="999.8" font-size="12.2" textLength="74" lengthAdjust="spacingAndGlyphs">Page : 00003</text>
</g>

<!-- hand cursor -->
<g id="handcursor" shape-rendering="crispEdges"><path d="M140 273h2v1h-2zM136 274h2v1h-2zM140 274h2v1h-2zM143 274h2v1h-2zM136 275h2v1h-2zM140 275h2v1h-2zM143 275h2v1h-2zM146 275h1v1h-1zM137 276h2v1h-2zM140 276h2v1h-2zM143 276h2v1h-2zM147 276h1v1h-1zM137 277h2v1h-2zM140 277h2v1h-2zM143 277h2v1h-2zM146 277h2v1h-2zM137 278h8v1h-8zM146 278h2v1h-2zM134 279h3v1h-3zM138 279h10v1h-10zM134 280h3v1h-3zM138 280h9v1h-9zM135 281h12v1h-12zM136 282h11v1h-11zM136 283h10v1h-10zM137 284h9v1h-9zM138 285h7v1h-7zM139 286h6v1h-6zM139 287h6v1h-6z" fill="#fff"/><path d="M140 272h2v1h-2zM136 273h2v1h-2zM139 273h1v1h-1zM142 273h3v1h-3zM135 274h1v1h-1zM138 274h2v1h-2zM142 274h1v1h-1zM145 274h1v1h-1zM135 275h1v1h-1zM138 275h2v1h-2zM142 275h1v1h-1zM145 275h1v1h-1zM147 275h1v1h-1zM136 276h1v1h-1zM139 276h1v1h-1zM142 276h1v1h-1zM145 276h2v1h-2zM148 276h1v1h-1zM136 277h1v1h-1zM139 277h1v1h-1zM142 277h1v1h-1zM145 277h1v1h-1zM148 277h1v1h-1zM134 278h3v1h-3zM145 278h1v1h-1zM148 278h1v1h-1zM133 279h1v1h-1zM137 279h1v1h-1zM148 279h1v1h-1zM133 280h1v1h-1zM137 280h1v1h-1zM147 280h1v1h-1zM134 281h1v1h-1zM147 281h1v1h-1zM135 282h1v1h-1zM147 282h1v1h-1zM135 283h1v1h-1zM146 283h1v1h-1zM136 284h1v1h-1zM146 284h1v1h-1zM137 285h1v1h-1zM145 285h1v1h-1zM138 286h1v1h-1zM145 286h1v1h-1zM138 287h1v1h-1zM145 287h1v1h-1z" fill="#000"/><rect x="139" y="288" width="6" height="1" fill="#3a3a3a"/></g>


</svg>
</body></html>
